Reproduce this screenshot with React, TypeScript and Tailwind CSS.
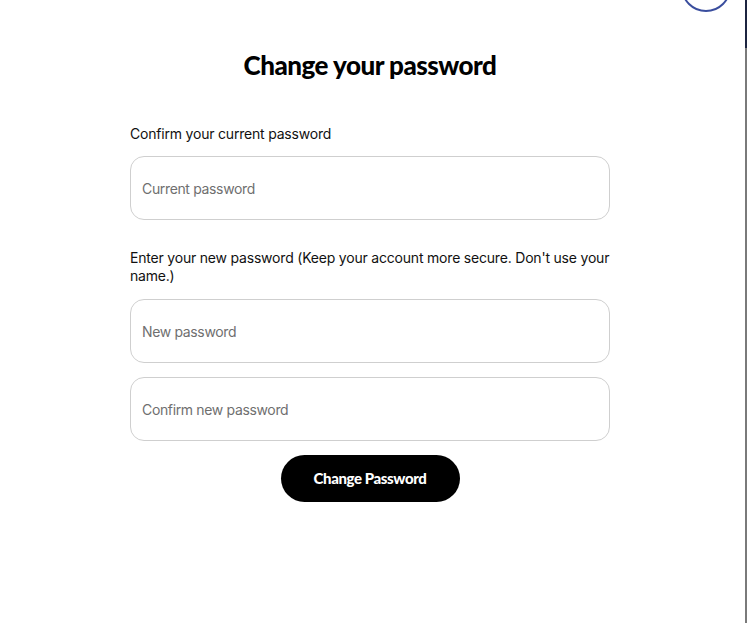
import { useState } from "react";

const font = { fontFamily: "Lato, 'Noto Sans', Arial, sans-serif" };

const PasswordField = ({
  placeholder,
  value,
  onChange,
}: {
  placeholder: string;
  value: string;
  onChange: (v: string) => void;
}) => (
  <input
    type="password"
    placeholder={placeholder}
    value={value}
    onChange={(e) => onChange(e.target.value)}
    className="w-full h-[64px] rounded-[14px] border border-[#cfcfcf] bg-white px-[11px] text-[14px] tracking-[-0.35px] text-[#222] placeholder:text-[#6f6f6f] outline-none font-['Inter',sans-serif]"
  />
);

const App = () => {
  const [current, setCurrent] = useState("");
  const [next, setNext] = useState("");
  const [confirm, setConfirm] = useState("");

  return (
    <div className="relative flex w-[747px] h-[623px] overflow-hidden bg-white">
      {/* avatar peeking in from the header */}
      <div className="absolute left-[681px] top-[-38px] w-[50px] h-[50px] rounded-full border-2 border-[#3a4e9e]" />

      <div className="w-[740px] flex justify-center pt-[48px]">
        <div className="w-[480px] flex flex-col">
          <h1
            className="text-center text-[26px] leading-[34px] font-black tracking-[-0.5px] text-black"
            style={font}
          >
            Change your password
          </h1>

          <p className="mt-[43px] text-[14px] leading-[18px] tracking-[-0.2px] text-[#111] font-['Inter',sans-serif]">
            Confirm your current password
          </p>
          <div className="mt-[13px]">
            <PasswordField placeholder="Current password" value={current} onChange={setCurrent} />
          </div>

          <p className="mt-[29px] text-[14px] leading-[18px] tracking-[-0.2px] text-[#111] font-['Inter',sans-serif]">
            Enter your new password (Keep your account more secure. Don't use your name.)
          </p>
          <div className="mt-[14px] flex flex-col gap-[14px]">
            <PasswordField placeholder="New password" value={next} onChange={setNext} />
            <PasswordField placeholder="Confirm new password" value={confirm} onChange={setConfirm} />
          </div>

          <div className="mt-[14px] flex justify-center">
            <button
              className="w-[179px] h-[47px] rounded-full bg-black text-white text-[15px] font-black tracking-[-0.4px]"
              style={font}
            >
              Change Password
            </button>
          </div>
        </div>
      </div>

      <div className="flex-1" />
      <div className="w-[2px] h-full flex flex-col">
        <div className="h-[48px] bg-[#1c2440]" />
        <div className="flex-1 bg-[#7a7a7a]" />
      </div>
    </div>
  );
};

export default App;
